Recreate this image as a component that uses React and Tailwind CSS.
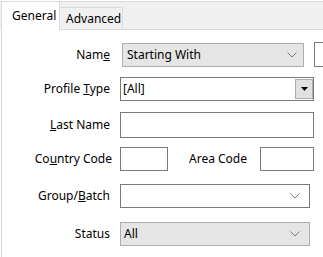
import React from 'react';

const font = { fontFamily: '"Noto Sans", "Liberation Sans", sans-serif' };

function Chevron() {
  return (
    <svg width="10" height="6" viewBox="0 0 10 6" className="shrink-0">
      <polyline points="0.5,0.5 5,5 9.5,0.5" fill="none" stroke="#7a7a7a" strokeWidth="1" />
    </svg>
  );
}

function Label({ children, w = 'w-[108px]' }) {
  return <div className={`${w} shrink-0 text-right text-[12px] text-black leading-4`}>{children}</div>;
}

export default function App() {
  return (
    <div className="w-[323px] h-[257px] bg-white overflow-hidden pt-px text-[12px] text-black" style={font}>
      <div className="border-t border-[#dadada]">
        {/* tab strip */}
        <div className="flex h-[28px] bg-[#f0f0f0] pl-px">
          <div className="w-[59px] shrink-0 bg-white border-l border-r border-[#dadada] pl-[10px] pt-[6px] leading-4">
            General
          </div>
          <div className="flex flex-1 items-end">
            <div className="h-[23px] w-[63px] shrink-0 border-t border-r border-b border-[#dadada] bg-[#f0f0f0] pl-[6px] pt-[3px] leading-4">
              Advanced
            </div>
            <div className="flex-1 h-full border-b border-[#dadada]" />
          </div>
        </div>

        {/* panel */}
        <div className="ml-px border-l border-[#dadada] h-[228px] flex flex-col overflow-hidden">
          <div className="flex items-center h-[25px] mt-[12px]">
            <Label>
              Nam<u>e</u>
            </Label>
            <div className="ml-[12px] w-[182px] h-[24px] shrink-0 mt-px bg-[#e5e5e5] border border-[#adadad] flex items-center pl-[4px] pr-[6px]">
              <span className="flex-1 leading-4">Starting With</span>
              <Chevron />
            </div>
            <div className="ml-[10px] w-[20px] h-[25px] shrink-0 bg-white border border-[#7a7a7a]" />
          </div>

          <div className="flex items-center h-[24px] mt-[10px]">
            <Label>
              Profile <u>T</u>ype
            </Label>
            <div className="ml-[10px] w-[194px] h-[24px] shrink-0 bg-white border border-[#7a7a7a] flex items-center pl-[2px] py-px">
              <span className="flex-1 leading-4">[All]</span>
              <div className="w-[18px] h-full bg-[#e1e1e1] border border-[#adadad] flex items-center justify-center">
                <svg width="7" height="4" viewBox="0 0 7 4">
                  <polygon points="0,0 7,0 3.5,4" fill="#000" />
                </svg>
              </div>
            </div>
          </div>

          <div className="flex items-center h-[26px] mt-[11px]">
            <Label>
              <u>L</u>ast Name
            </Label>
            <div className="ml-[10px] w-[194px] h-[26px] shrink-0 bg-white border border-[#7a7a7a]" />
          </div>

          <div className="flex items-center h-[24px] mt-[9px]">
            <Label w="w-[110px]">
              Co<u>u</u>ntry Code
            </Label>
            <div className="ml-[8px] w-[48px] h-[24px] shrink-0 bg-white border border-[#7a7a7a]" />
            <div className="ml-[21px] w-[71px] shrink-0 leading-4">Area Code</div>
            <div className="w-[54px] h-[24px] shrink-0 bg-white border border-[#7a7a7a]" />
          </div>

          <div className="flex items-center h-[24px] mt-[13px]">
            <Label>
              Group/<u>B</u>atch
            </Label>
            <div className="ml-[10px] w-[190px] h-[24px] shrink-0 bg-white border border-[#7a7a7a] flex items-center justify-end pr-[9px]">
              <Chevron />
            </div>
          </div>

          <div className="flex items-center h-[24px] mt-[14px]">
            <Label>Status</Label>
            <div className="ml-[10px] w-[190px] h-[24px] shrink-0 bg-[#e5e5e5] border border-[#adadad] flex items-center pl-[3px] pr-[9px]">
              <span className="flex-1 leading-4">All</span>
              <Chevron />
            </div>
          </div>
        </div>
      </div>
    </div>
  );
}
